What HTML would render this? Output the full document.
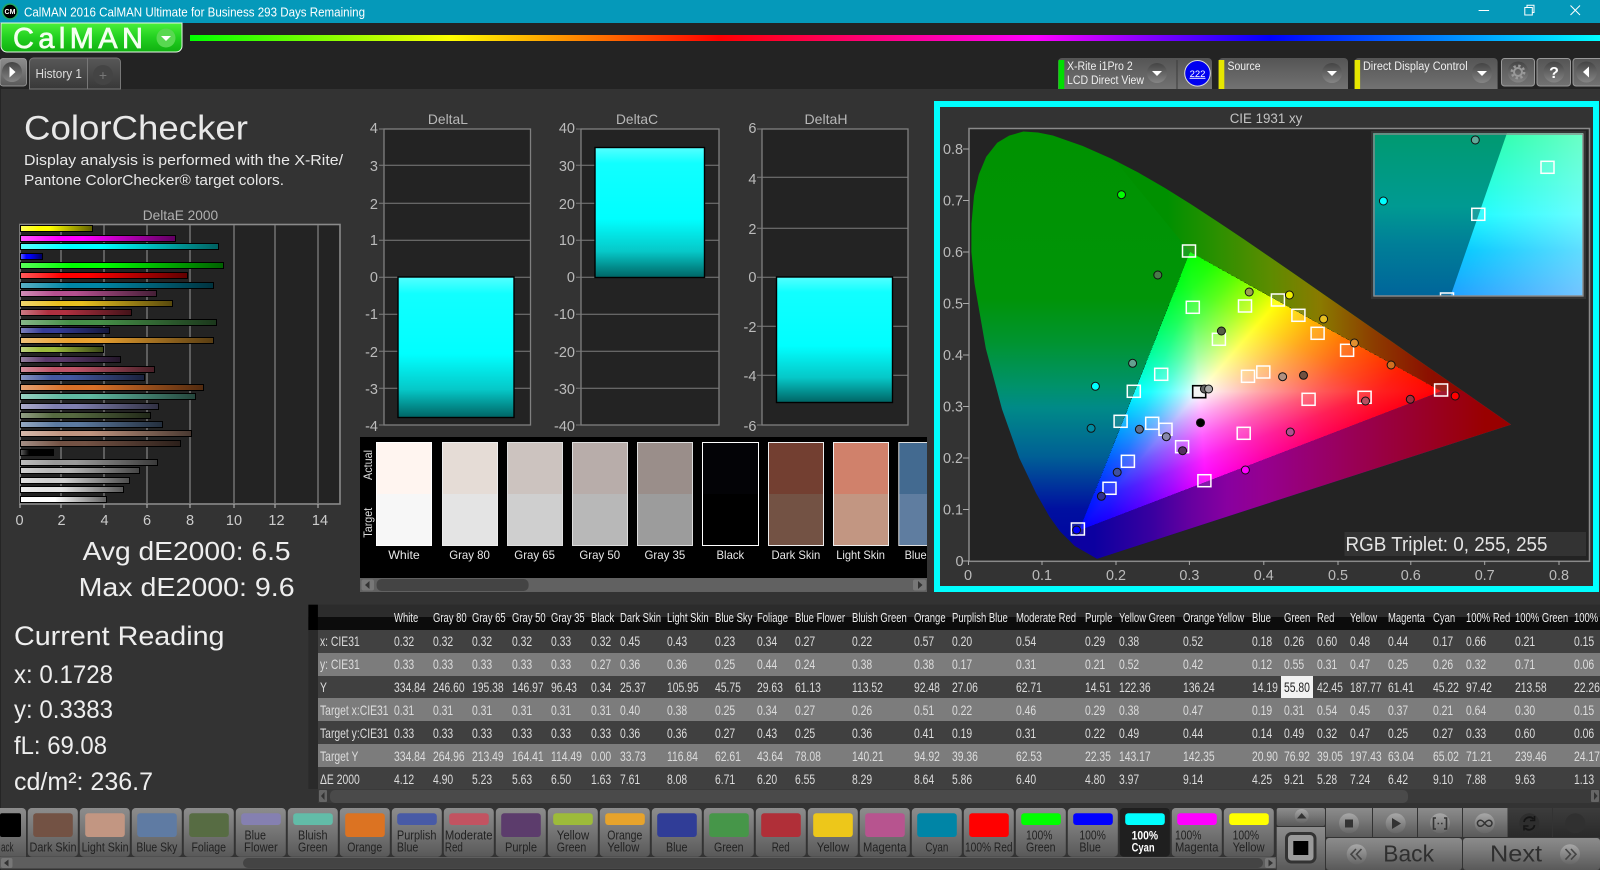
<!DOCTYPE html>
<html><head><meta charset="utf-8"><title>CalMAN ColorChecker</title>
<style>
html,body{margin:0;padding:0;background:#333;width:1600px;height:870px;overflow:hidden}
body{position:relative;font-family:"Liberation Sans",sans-serif}
svg{position:absolute;left:0;top:0}
text{font-family:"Liberation Sans",sans-serif}
.l{font-size:14.5px;fill:#bbb}
.e{text-anchor:end}.m{text-anchor:middle}
.t{font-size:12.5px;fill:#222}
.c{position:absolute;top:607.3px;font-size:14px;line-height:22.9px;color:#dcdcdc;white-space:nowrap;transform:scaleX(.74);transform-origin:0 0}
.c::first-line{font-size:12.8px;color:#eee}
.b{position:absolute;left:20px;height:7px;box-sizing:border-box;border:1.5px solid #000;background-image:linear-gradient(90deg,rgba(255,255,255,.35),transparent 25%,transparent 40%,rgba(0,0,0,.62))}
#hl{position:absolute;left:1281px;top:676px;width:32px;height:21.5px;background:#f2f2f2}
.w polygon{shape-rendering:crispEdges}
.w .s{mix-blend-mode:screen}
</style></head><body>
<svg width="1600" height="870" viewBox="0 0 1600 870" xmlns="http://www.w3.org/2000/svg">
<defs>
<linearGradient id="rb" x1="190" x2="1600" y1="0" y2="0" gradientUnits="userSpaceOnUse"><stop offset="0" stop-color="#0f0"/><stop offset=".185" stop-color="#ff0"/><stop offset=".375" stop-color="#f00"/><stop offset=".6" stop-color="#f0f"/><stop offset=".766" stop-color="#00f"/><stop offset="1" stop-color="#0ff"/></linearGradient>
<linearGradient id="cg" x1="0" x2="0" y1="0" y2="1"><stop offset="0" stop-color="#4af03a"/><stop offset=".5" stop-color="#22d020"/><stop offset="1" stop-color="#10b010"/></linearGradient>
<linearGradient id="btn" x1="0" x2="0" y1="0" y2="1"><stop offset="0" stop-color="#8c8c8c"/><stop offset=".35" stop-color="#7c7c7c"/><stop offset="1" stop-color="#595959"/></linearGradient>
<linearGradient id="dk" x1="0" x2="0" y1="0" y2="1"><stop offset="0" stop-color="#3c3c3c"/><stop offset="1" stop-color="#2a2a2a"/></linearGradient>
<linearGradient id="cir" x1="0" x2="0" y1="0" y2="1"><stop offset="0" stop-color="#a8a8a8"/><stop offset="1" stop-color="#666"/></linearGradient>
<linearGradient id="ci2" x1="0" x2="0" y1="0" y2="1"><stop offset="0" stop-color="#444"/><stop offset="1" stop-color="#858585"/></linearGradient>
<linearGradient id="top" x1="0" x2="0" y1="0" y2="1"><stop offset="0" stop-color="#555"/><stop offset="1" stop-color="#727272"/></linearGradient>
<linearGradient id="tab" x1="0" x2="0" y1="0" y2="1"><stop offset="0" stop-color="#585858"/><stop offset="1" stop-color="#383838"/></linearGradient>
<linearGradient id="bar" x1="0" x2="0" y1="0" y2="1"><stop offset="0" stop-color="#55ffff"/><stop offset=".12" stop-color="#11ffff"/><stop offset=".55" stop-color="#00ffff"/><stop offset=".8" stop-color="#06c8c8"/><stop offset="1" stop-color="#006464"/></linearGradient>
<clipPath id="hs"><polygon points=".1741,.005 .144,.0297 .1241,.0578 .1096,.0868 .0913,.1327 .0687,.2007 .0454,.295 .0235,.4127 .0082,.5384 .0039,.6 .004,.6548 .0075,.71 .0139,.7502 .024,.785 .0389,.812 .055,.826 .0743,.8338 .094,.832 .1142,.8262 .1547,.8059 .1929,.7816 .2296,.7543 .2658,.7243 .3016,.6923 .3373,.6589 .3731,.6245 .4087,.5896 .4441,.5547 .4788,.5202 .5125,.4866 .5448,.4544 .5752,.4242 .6029,.3965 .627,.3725 .6658,.334 .6915,.3083 .719,.2809 .7347,.2653"/></clipPath>
<linearGradient id="gL" gradientUnits="userSpaceOnUse" x1="0" x2="0" y1=".85" y2="0"><stop offset="0" stop-color="#009200"/><stop offset=".4" stop-color="#009408"/><stop offset=".5" stop-color="#009430"/><stop offset=".6" stop-color="#00926a"/><stop offset=".65" stop-color="#008a88"/><stop offset=".76" stop-color="#006095"/><stop offset=".88" stop-color="#0010a0"/><stop offset="1" stop-color="#0000a0"/></linearGradient>
<linearGradient id="gT" gradientUnits="userSpaceOnUse" x1=".27" x2=".7" y1="0" y2="0"><stop offset="0" stop-color="#009000"/><stop offset=".15" stop-color="#2a9000"/><stop offset=".32" stop-color="#5c8c00"/><stop offset=".48" stop-color="#8a7a00"/><stop offset=".65" stop-color="#8c3c00"/><stop offset=".82" stop-color="#8c1000"/><stop offset="1" stop-color="#900000"/></linearGradient>
<linearGradient id="gB" gradientUnits="userSpaceOnUse" x1=".17" x2=".7" y1="0" y2="0"><stop offset="0" stop-color="#0c00a0"/><stop offset=".15" stop-color="#3a00a0"/><stop offset=".25" stop-color="#6800a0"/><stop offset=".34" stop-color="#8800a0"/><stop offset=".43" stop-color="#950090"/><stop offset=".62" stop-color="#990060"/><stop offset=".81" stop-color="#990030"/><stop offset="1" stop-color="#990000"/></linearGradient>
<linearGradient id="fr"><stop offset="0" stop-color="#000"/><stop offset=".25" stop-color="#200000"/><stop offset=".5" stop-color="#5a0000"/><stop offset=".75" stop-color="#a60000"/><stop offset="1" stop-color="#f00"/></linearGradient>
<linearGradient id="fg"><stop offset="0" stop-color="#000"/><stop offset=".25" stop-color="#002000"/><stop offset=".5" stop-color="#005a00"/><stop offset=".75" stop-color="#00a600"/><stop offset="1" stop-color="#0f0"/></linearGradient>
<linearGradient id="fb"><stop offset="0" stop-color="#000"/><stop offset=".25" stop-color="#000020"/><stop offset=".5" stop-color="#00005a"/><stop offset=".75" stop-color="#0000a6"/><stop offset="1" stop-color="#00f"/></linearGradient>
<linearGradient id="w1a" href="#fg" gradientUnits="userSpaceOnUse" x1=".64" y1=".33" x2=".4006" y2=".4746"/>
<linearGradient id="w1b" href="#fb" gradientUnits="userSpaceOnUse" x1=".4393" y1=".4889" x2=".3127" y2=".329"/>
<linearGradient id="w2a" href="#fr" gradientUnits="userSpaceOnUse" x1=".3" y1=".6" x2=".4292" y2=".5219"/>
<linearGradient id="w2b" href="#fb" gradientUnits="userSpaceOnUse" x1=".4399" y1=".4883" x2=".3127" y2=".329"/>
<linearGradient id="w3a" href="#fb" gradientUnits="userSpaceOnUse" x1=".3" y1=".6" x2=".3" y2=".329"/>
<linearGradient id="w3b" href="#fr" gradientUnits="userSpaceOnUse" x1=".2312" y1=".3516" x2=".3127" y2=".329"/>
<linearGradient id="w4a" href="#fg" gradientUnits="userSpaceOnUse" x1=".15" y1=".06" x2=".15" y2=".329"/>
<linearGradient id="w4b" href="#fr" gradientUnits="userSpaceOnUse" x1=".2313" y1=".3517" x2=".3127" y2=".329"/>
<linearGradient id="w5a" href="#fr" gradientUnits="userSpaceOnUse" x1=".15" y1=".06" x2=".3251" y2=".0683"/>
<linearGradient id="w5b" href="#fg" gradientUnits="userSpaceOnUse" x1=".3885" y1=".1911" x2=".3127" y2=".329"/>
<linearGradient id="w6a" href="#fb" gradientUnits="userSpaceOnUse" x1=".64" y1=".33" x2=".3134" y2=".3145"/>
<linearGradient id="w6b" href="#fg" gradientUnits="userSpaceOnUse" x1=".3887" y1=".1913" x2=".3127" y2=".329"/>
<linearGradient id="iL" x1="0" x2="0" y1="0" y2="1"><stop offset="0" stop-color="#009a70"/><stop offset=".45" stop-color="#009a92"/><stop offset=".68" stop-color="#007f98"/><stop offset="1" stop-color="#00659a"/></linearGradient>
<linearGradient id="iR" x1="0" x2="0" y1="0" y2="1"><stop offset="0" stop-color="#10ffa0"/><stop offset=".3" stop-color="#10ffd8"/><stop offset=".5" stop-color="#10fcff"/><stop offset=".72" stop-color="#00c8ff"/><stop offset="1" stop-color="#20a0ff"/></linearGradient>
<linearGradient id="iW" x1="0" x2="1" y1="0" y2="0"><stop offset="0" stop-color="#fff" stop-opacity="0"/><stop offset="1" stop-color="#fff" stop-opacity=".38"/></linearGradient>
<clipPath id="ins"><rect x="1373" y="133" width="210" height="163"/></clipPath>
</defs>

<!-- base -->
<rect width="1600" height="870" fill="#333"/>
<rect y="23" width="1600" height="66" fill="#232323"/>
<rect x="0" y="89" width="1" height="781" fill="#252525"/>
<rect width="1600" height="23" fill="#0599ba"/>
<circle cx="10" cy="11.5" r="7.5" fill="#000" stroke="#2a6" stroke-width="1.5"/>
<text x="10" y="14" class="m" font-size="7" font-weight="bold" fill="#fff">CM</text>
<text x="24" y="16.5" font-size="12.5" fill="#fff" textLength="341" lengthAdjust="spacingAndGlyphs">CalMAN 2016 CalMAN Ultimate for Business 293 Days Remaining</text>
<rect x="1478.6" y="10" width="10.5" height="1" fill="#fff"/>
<path d="M1524.8 7.5h7.5v7.5h-7.5zM1527 7.5v-2.3h7v7.3h-1.7" fill="none" stroke="#fff" stroke-width="1"/>
<path d="M1570.5 5.5l9.5 9.5M1580 5.5l-9.5 9.5" stroke="#fff" stroke-width="1" fill="none"/>

<!-- CalMAN logo + rainbow -->
<path d="M1 23h181v23a6 6 0 0 1-6 6H7a6 6 0 0 1-6-6z" fill="url(#cg)" stroke="#e8f8e8" stroke-width="1"/>
<text x="13" y="48" font-size="29" fill="#f4fff0" stroke="#f4fff0" stroke-width=".7" textLength="130" lengthAdjust="spacing">CalMAN</text>
<circle cx="166" cy="38" r="9.5" fill="#58d850"/>
<polygon points="161,36 171,36 166,41" fill="#fff"/>
<rect x="190" y="35" width="1410" height="6" fill="url(#rb)"/>

<!-- tabs -->
<rect x="0" y="58.5" width="26.5" height="27.5" rx="3" fill="url(#btn)" stroke="#aaa" stroke-width=".7"/>
<circle cx="12" cy="72" r="10" fill="url(#ci2)"/>
<polygon points="9.5,66.5 15.5,72 9.5,77.5" fill="#fff"/>
<path d="M29.5 89V62a4 4 0 0 1 4-4h83a4 4 0 0 1 4 4v27z" fill="url(#tab)" stroke="#777" stroke-width="1"/>
<rect x="87" y="58" width="1" height="31" fill="#777"/>
<text x="35.5" y="78" font-size="12.5" fill="#ddd" textLength="46.5" lengthAdjust="spacingAndGlyphs">History 1</text>
<circle cx="103" cy="75" r="10" fill="#444"/>
<text x="103" y="80" class="m" font-size="14" fill="#777">+</text>

<!-- top right controls -->
<path d="M1058 89V62a4 4 0 0 1 4-4h146a4 4 0 0 1 4 4v27z" fill="url(#top)"/>
<rect x="1058.5" y="60" width="5.8" height="29" fill="#00dd00"/>
<text x="1067" y="70" font-size="11.5" fill="#eee" textLength="65.7" lengthAdjust="spacingAndGlyphs">X-Rite i1Pro 2</text>
<text x="1067" y="84" font-size="11.5" fill="#eee" textLength="77" lengthAdjust="spacingAndGlyphs">LCD Direct View</text>
<circle cx="1157" cy="73" r="10" fill="url(#ci2)"/><polygon points="1152,71 1162,71 1157,76" fill="#fff"/>
<rect x="1176.5" y="60" width="1" height="29" fill="#3c3c3c"/>
<circle cx="1197.5" cy="73.3" r="12.8" fill="#0000f0" stroke="#ddd" stroke-width="1"/>
<text x="1197.5" y="76.8" class="m" font-size="9.5" fill="#fff" text-decoration="underline">222</text>
<path d="M1218.6 89V62a4 4 0 0 1 4-4h121.4a4 4 0 0 1 4 4v27z" fill="url(#top)"/>
<rect x="1218.6" y="60" width="5.7" height="29" fill="#e6e600"/>
<text x="1227.5" y="70" font-size="11.5" fill="#eee" textLength="33" lengthAdjust="spacingAndGlyphs">Source</text>
<circle cx="1332" cy="73" r="10" fill="url(#ci2)"/><polygon points="1327,71 1337,71 1332,76" fill="#fff"/>
<path d="M1354.6 89V62a4 4 0 0 1 4-4h135a4 4 0 0 1 4 4v27z" fill="url(#top)"/>
<rect x="1354.6" y="60" width="5.5" height="29" fill="#e6e600"/>
<text x="1363" y="70" font-size="11.5" fill="#eee" textLength="104.6" lengthAdjust="spacingAndGlyphs">Direct Display Control</text>
<circle cx="1482" cy="73" r="10" fill="url(#ci2)"/><polygon points="1477,71 1487,71 1482,76" fill="#fff"/>
<rect x="1501.5" y="58.5" width="33" height="27.5" rx="3" fill="url(#top)" stroke="#999" stroke-width="1"/>
<rect x="1537" y="58.5" width="33.5" height="27.5" rx="3" fill="url(#top)" stroke="#999" stroke-width="1"/>
<rect x="1573" y="58.5" width="30" height="27.5" rx="3" fill="url(#top)" stroke="#999" stroke-width="1"/>
<circle cx="1518" cy="72" r="10.5" fill="url(#ci2)"/>
<circle cx="1518" cy="72" r="4" fill="none" stroke="#999" stroke-width="2"/>
<circle cx="1518" cy="72" r="6.2" fill="none" stroke="#999" stroke-width="2.4" stroke-dasharray="2.4 2.47"/>
<circle cx="1554" cy="72" r="10.5" fill="url(#ci2)"/>
<text x="1554" y="78" class="m" font-size="16" font-weight="bold" fill="#fff">?</text>
<circle cx="1586.4" cy="72" r="10.5" fill="url(#ci2)"/>
<polygon points="1589,66.5 1589,77.5 1583,72" fill="#fff"/>

<!-- left text -->
<text x="24" y="139.3" font-size="34" fill="#e8e8e8" textLength="224" lengthAdjust="spacingAndGlyphs">ColorChecker</text>
<text x="24" y="165" font-size="15" fill="#e8e8e8" textLength="319" lengthAdjust="spacingAndGlyphs">Display analysis is performed with the X-Rite/</text>
<text x="24" y="185" font-size="15" fill="#e8e8e8" textLength="260" lengthAdjust="spacingAndGlyphs">Pantone ColorChecker® target colors.</text>

<!-- DeltaE chart -->
<text x="142.7" y="220" font-size="14" fill="#b0b0b0" textLength="75.5" lengthAdjust="spacingAndGlyphs">DeltaE 2000</text>
<rect x="20" y="224.5" width="320" height="279.5" fill="#232323" stroke="#8a8a8a" stroke-width="1.6"/>
<g stroke="#777" stroke-width="1.4"><path d="M61 225V504M104 225V504M147 225V504M190 225V504M234 225V504M275 225V504M318 225V504"/></g>
<text x="19.5" y="525" class="l m" style="fill:#ccc">0</text><text x="61.5" y="525" class="l m" style="fill:#ccc">2</text><text x="104.5" y="525" class="l m" style="fill:#ccc">4</text><text x="147" y="525" class="l m" style="fill:#ccc">6</text><text x="190" y="525" class="l m" style="fill:#ccc">8</text><text x="234" y="525" class="l m" style="fill:#ccc">10</text><text x="276.5" y="525" class="l m" style="fill:#ccc">12</text><text x="320" y="525" class="l m" style="fill:#ccc">14</text>
<path d="M20 504v4M61 504v4M104 504v4M147 504v4M190 504v4M234 504v4M275 504v4M318 504v4" stroke="#aaa" stroke-width="1.2"/>

<!-- readouts -->
<text x="82.6" y="560" font-size="26" fill="#eee" textLength="208" lengthAdjust="spacingAndGlyphs">Avg dE2000: 6.5</text>
<text x="78.6" y="596" font-size="26" fill="#eee" textLength="216" lengthAdjust="spacingAndGlyphs">Max dE2000: 9.6</text>
<text x="14" y="645" font-size="27" fill="#eee" textLength="210.5" lengthAdjust="spacingAndGlyphs">Current Reading</text>
<text x="14" y="683" font-size="25" fill="#eee" textLength="99" lengthAdjust="spacingAndGlyphs">x: 0.1728</text>
<text x="14" y="718" font-size="25" fill="#eee" textLength="99" lengthAdjust="spacingAndGlyphs">y: 0.3383</text>
<text x="14" y="754" font-size="25" fill="#eee" textLength="93" lengthAdjust="spacingAndGlyphs">fL: 69.08</text>
<text x="14" y="790" font-size="25" fill="#eee" textLength="139" lengthAdjust="spacingAndGlyphs">cd/m²: 236.7</text>

<!-- Delta charts -->
<text x="447.9" y="124" class="m" font-size="14" fill="#b8b8b8" textLength="40" lengthAdjust="spacingAndGlyphs">DeltaL</text>
<text x="637" y="124" class="m" font-size="14" fill="#b8b8b8" textLength="42" lengthAdjust="spacingAndGlyphs">DeltaC</text>
<text x="826" y="124" class="m" font-size="14" fill="#b8b8b8" textLength="43" lengthAdjust="spacingAndGlyphs">DeltaH</text>
<rect x="384" y="129" width="146.5" height="296" fill="#232323" stroke="#808080" stroke-width="1.3"/>
<path d="M379 129h5M379 165.3H530M379 203.3H530M379 240.3H530M379 277.3H530M379 314.3H530M379 351.3H530M379 388.3H530M379 425h5" stroke="#7c7c7c" stroke-width="1" fill="none"/>
<rect x="398" y="277" width="116" height="140.5" fill="url(#bar)" stroke="#000" stroke-width="1.4"/>
<text x="378" y="133" class="l e">4</text><text x="378" y="171" class="l e">3</text><text x="378" y="209" class="l e">2</text><text x="378" y="245" class="l e">1</text><text x="378" y="282" class="l e">0</text><text x="378" y="319" class="l e">-1</text><text x="378" y="357" class="l e">-2</text><text x="378" y="394" class="l e">-3</text><text x="378" y="431" class="l e">-4</text>
<rect x="581" y="129" width="138" height="296" fill="#232323" stroke="#808080" stroke-width="1.3"/>
<path d="M576 129h5M576 165.3H719M576 203.3H719M576 240.3H719M576 277.3H719M576 314.3H719M576 351.3H719M576 388.3H719M576 425h5" stroke="#7c7c7c" stroke-width="1" fill="none"/>
<rect x="595" y="147.5" width="109.5" height="130" fill="url(#bar)" stroke="#000" stroke-width="1.4"/>
<text x="575" y="133" class="l e">40</text><text x="575" y="171" class="l e">30</text><text x="575" y="209" class="l e">20</text><text x="575" y="245" class="l e">10</text><text x="575" y="282" class="l e">0</text><text x="575" y="319" class="l e">-10</text><text x="575" y="357" class="l e">-20</text><text x="575" y="394" class="l e">-30</text><text x="575" y="431" class="l e">-40</text>
<rect x="762" y="129" width="146" height="296" fill="#232323" stroke="#808080" stroke-width="1.3"/>
<path d="M757 129h5M757 177.3H908M757 228.3H908M757 277.3H908M757 326.3H908M757 375.3H908M757 425h5" stroke="#7c7c7c" stroke-width="1" fill="none"/>
<rect x="776.5" y="277" width="116" height="125.5" fill="url(#bar)" stroke="#000" stroke-width="1.4"/>
<text x="756.4" y="133" class="l e">6</text><text x="756.4" y="184" class="l e">4</text><text x="756.4" y="234" class="l e">2</text><text x="756.4" y="282" class="l e">0</text><text x="756.4" y="332" class="l e">-2</text><text x="756.4" y="381" class="l e">-4</text><text x="756.4" y="431" class="l e">-6</text>

<!-- swatch strip -->
<rect x="360" y="437" width="567" height="141" fill="#000"/>
<text transform="translate(372 465) rotate(-90)" class="m" font-size="12" fill="#ddd" textLength="30" lengthAdjust="spacingAndGlyphs">Actual</text>
<text transform="translate(372 522.7) rotate(-90)" class="m" font-size="12" fill="#ddd" textLength="30" lengthAdjust="spacingAndGlyphs">Target</text>
<g>
<rect x="376" y="442" width="56" height="104" fill="#fff"/><rect x="377" y="443" width="54" height="51" fill="#fff5f0"/><rect x="377" y="494" width="54" height="51" fill="#f7f7f7"/>
<rect x="442" y="442" width="56" height="104" fill="#eee"/><rect x="443" y="443" width="54" height="51" fill="#e5dcd6"/><rect x="443" y="494" width="54" height="51" fill="#e4e4e4"/>
<rect x="507" y="442" width="56" height="104" fill="#ddd"/><rect x="508" y="443" width="54" height="51" fill="#ccc3bf"/><rect x="508" y="494" width="54" height="51" fill="#cfcfcf"/>
<rect x="572" y="442" width="56" height="104" fill="#ddd"/><rect x="573" y="443" width="54" height="51" fill="#b8adaa"/><rect x="573" y="494" width="54" height="51" fill="#b8b8b8"/>
<rect x="637" y="442" width="56" height="104" fill="#ddd"/><rect x="638" y="443" width="54" height="51" fill="#9a8e8a"/><rect x="638" y="494" width="54" height="51" fill="#9c9c9c"/>
<rect x="702" y="442" width="57" height="104" fill="#fff"/><rect x="703" y="443" width="55" height="51" fill="#030306"/><rect x="703" y="494" width="55" height="51" fill="#000"/>
<rect x="768" y="442" width="56" height="104" fill="#eee"/><rect x="769" y="443" width="54" height="51" fill="#733f31"/><rect x="769" y="494" width="54" height="51" fill="#735244"/>
<rect x="833" y="442" width="56" height="104" fill="#eee"/><rect x="834" y="443" width="54" height="51" fill="#d0816b"/><rect x="834" y="494" width="54" height="51" fill="#c29682"/>
<rect x="898.3" y="442" width="28.7" height="104" fill="#ddd"/><rect x="899.3" y="443" width="27.7" height="51" fill="#436a90"/><rect x="899.3" y="494" width="27.7" height="51" fill="#5f7da0"/>
</g>
<g font-size="12" fill="#e8e8e8">
<text x="388.3" y="559" textLength="31.5" lengthAdjust="spacingAndGlyphs">White</text>
<text x="449.2" y="559" textLength="40.7" lengthAdjust="spacingAndGlyphs">Gray 80</text>
<text x="514.3" y="559" textLength="40.7" lengthAdjust="spacingAndGlyphs">Gray 65</text>
<text x="579.4" y="559" textLength="40.7" lengthAdjust="spacingAndGlyphs">Gray 50</text>
<text x="644.5" y="559" textLength="40.7" lengthAdjust="spacingAndGlyphs">Gray 35</text>
<text x="716.5" y="559" textLength="27.7" lengthAdjust="spacingAndGlyphs">Black</text>
<text x="771.5" y="559" textLength="48.8" lengthAdjust="spacingAndGlyphs">Dark Skin</text>
<text x="836.2" y="559" textLength="48.8" lengthAdjust="spacingAndGlyphs">Light Skin</text>
<text x="904.6" y="559" textLength="22" lengthAdjust="spacingAndGlyphs">Blue</text>
</g>
<rect x="360" y="578" width="567" height="14" fill="#616161"/>
<rect x="376.6" y="579" width="152" height="12" rx="5" fill="#444"/>
<rect x="361.5" y="579.5" width="12.5" height="11" rx="2" fill="#777"/><polygon points="369.5,581 369.5,589 365,585" fill="#333"/>
<rect x="913" y="579.5" width="13" height="11" rx="2" fill="#777"/><polygon points="918,581 918,589 922.5,585" fill="#333"/>

<!-- CIE -->
<rect x="937" y="104" width="659" height="485" fill="#333" stroke="#00ffff" stroke-width="6"/>
<text x="1266" y="123" class="m" font-size="13.5" fill="#c4c4c4" textLength="72.6" lengthAdjust="spacingAndGlyphs">CIE 1931 xy</text>
<rect x="969" y="128.5" width="620.5" height="432.8" fill="#232323" stroke="#8a8a8a" stroke-width="1.5"/>
<g transform="translate(968.5 561.3) scale(738.5 -515.4)">
 <g clip-path="url(#hs)">
  <rect x="-.05" y="-.05" width=".9" height=".95" fill="url(#gL)"/>
  <polygon points=".3,.6 .1,.95 .85,.95 .85,.26 .64,.33" fill="url(#gT)"/>
  <polygon points=".15,.06 .64,.33 .85,.33 .85,-.05 .1,-.05" fill="url(#gB)"/>
 </g>
 <g class="w" style="isolation:isolate">
  <polygon points=".64,.33 .3,.6 .15,.06" fill="#000"/>
  <polygon class="s" points=".64,.33 .419,.505 .3127,.329" fill="#f00"/><polygon class="s" points=".64,.33 .419,.505 .3127,.329" fill="url(#w1a)"/><polygon class="s" points=".64,.33 .419,.505 .3127,.329" fill="url(#w1b)"/>
  <polygon class="s" points=".3,.6 .419,.505 .3127,.329" fill="#0f0"/><polygon class="s" points=".3,.6 .419,.505 .3127,.329" fill="url(#w2a)"/><polygon class="s" points=".3,.6 .419,.505 .3127,.329" fill="url(#w2b)"/>
  <polygon class="s" points=".3,.6 .225,.329 .3127,.329" fill="#0f0"/><polygon class="s" points=".3,.6 .225,.329 .3127,.329" fill="url(#w3a)"/><polygon class="s" points=".3,.6 .225,.329 .3127,.329" fill="url(#w3b)"/>
  <polygon class="s" points=".15,.06 .225,.329 .3127,.329" fill="#00f"/><polygon class="s" points=".15,.06 .225,.329 .3127,.329" fill="url(#w4a)"/><polygon class="s" points=".15,.06 .225,.329 .3127,.329" fill="url(#w4b)"/>
  <polygon class="s" points=".15,.06 .321,.154 .3127,.329" fill="#00f"/><polygon class="s" points=".15,.06 .321,.154 .3127,.329" fill="url(#w5a)"/><polygon class="s" points=".15,.06 .321,.154 .3127,.329" fill="url(#w5b)"/>
  <polygon class="s" points=".64,.33 .321,.154 .3127,.329" fill="#f00"/><polygon class="s" points=".64,.33 .321,.154 .3127,.329" fill="url(#w6a)"/><polygon class="s" points=".64,.33 .321,.154 .3127,.329" fill="url(#w6b)"/>
 </g>
</g>
<path d="M963 149h6M963 200.5h6M963 252h6M963 303.5h6M963 355h6M963 406.5h6M963 458h6M963 509.5h6M963 561h6M968.5 561v4M1042 561v4M1116 561v4M1189.4 561v4M1263.8 561v4M1338 561v4M1410.8 561v4M1484.7 561v4M1559 561v4" stroke="#aaa" stroke-width="1"/>
<g font-size="14.5" fill="#bbb">
<text x="943" y="154" textLength="20" lengthAdjust="spacingAndGlyphs">0.8</text><text x="943" y="205.5" textLength="20" lengthAdjust="spacingAndGlyphs">0.7</text><text x="943" y="257" textLength="20" lengthAdjust="spacingAndGlyphs">0.6</text><text x="943" y="308.5" textLength="20" lengthAdjust="spacingAndGlyphs">0.5</text><text x="943" y="360" textLength="20" lengthAdjust="spacingAndGlyphs">0.4</text><text x="943" y="411.5" textLength="20" lengthAdjust="spacingAndGlyphs">0.3</text><text x="943" y="463" textLength="20" lengthAdjust="spacingAndGlyphs">0.2</text><text x="943" y="514.5" textLength="20" lengthAdjust="spacingAndGlyphs">0.1</text><text x="955.5" y="566">0</text>
<text x="968" y="580" class="m">0</text><text x="1032" y="580" textLength="20" lengthAdjust="spacingAndGlyphs">0.1</text><text x="1106" y="580" textLength="20" lengthAdjust="spacingAndGlyphs">0.2</text><text x="1179.4" y="580" textLength="20" lengthAdjust="spacingAndGlyphs">0.3</text><text x="1253.8" y="580" textLength="20" lengthAdjust="spacingAndGlyphs">0.4</text><text x="1328" y="580" textLength="20" lengthAdjust="spacingAndGlyphs">0.5</text><text x="1400.8" y="580" textLength="20" lengthAdjust="spacingAndGlyphs">0.6</text><text x="1474.7" y="580" textLength="20" lengthAdjust="spacingAndGlyphs">0.7</text><text x="1549" y="580" textLength="20" lengthAdjust="spacingAndGlyphs">0.8</text>
</g>
<!-- target squares -->
<g fill="#fff" fill-opacity=".1" stroke="#fff" stroke-width="1.5">
<rect x="1182.5" y="245" width="13" height="12"/><rect x="1186.3" y="301.3" width="13" height="12"/><rect x="1238.5" y="300" width="13" height="12"/><rect x="1271.4" y="294" width="13" height="12"/><rect x="1291.9" y="309.3" width="13" height="12"/><rect x="1311.1" y="327.3" width="13" height="12"/><rect x="1340.6" y="344.3" width="13" height="12"/><rect x="1434.6" y="384" width="13" height="12"/><rect x="1358.1" y="391.3" width="13" height="12"/><rect x="1302.1" y="393.3" width="13" height="12"/><rect x="1212.4" y="333.3" width="13" height="12"/><rect x="1154.7" y="368.3" width="13" height="12"/><rect x="1127.3" y="385.3" width="13" height="12"/><rect x="1241.5" y="370.3" width="13" height="12"/><rect x="1256.8" y="366" width="13" height="12"/><rect x="1237.2" y="427.3" width="13" height="12"/><rect x="1114.1" y="415.3" width="13" height="12"/><rect x="1145.7" y="417.3" width="13" height="12"/><rect x="1159" y="423.3" width="13" height="12"/><rect x="1175.6" y="440.7" width="13" height="12"/><rect x="1121.4" y="455.3" width="13" height="12"/><rect x="1103" y="482.3" width="13" height="12"/><rect x="1071.4" y="523" width="13" height="12"/><rect x="1197.9" y="474.7" width="13" height="12"/>
</g>
<rect x="1192.7" y="385.7" width="13" height="12" fill="#f4f4f4" stroke="#000" stroke-width="1.6"/>
<g stroke="#111" stroke-width="1">
<circle cx="1121.5" cy="194.7" r="4" fill="#0f0"/><circle cx="1157.8" cy="275" r="4" fill="#4a7a4a"/><circle cx="1249.2" cy="292" r="4" fill="#9aa050"/><circle cx="1289.4" cy="295" r="4" fill="#ee0"/><circle cx="1323.6" cy="319" r="4" fill="#e8c020"/><circle cx="1221.4" cy="331" r="4" fill="#555f44"/><circle cx="1354.4" cy="343" r="4" fill="#e09030"/><circle cx="1132.6" cy="363.3" r="4" fill="#65a090"/><circle cx="1391.1" cy="365" r="4" fill="#d07020"/><circle cx="1282.6" cy="376.7" r="4" fill="#b09080"/><circle cx="1303.5" cy="375.3" r="4" fill="#705040"/><circle cx="1095.4" cy="386.3" r="4" fill="#0ff"/><circle cx="1204.4" cy="389" r="4" fill="#666"/><circle cx="1208.6" cy="389" r="4" fill="#aaa"/><circle cx="1455.2" cy="396" r="4" fill="#f00"/><circle cx="1410.3" cy="399.3" r="4" fill="#a03040"/><circle cx="1365.5" cy="401" r="4" fill="#b85060"/><circle cx="1200.5" cy="422.7" r="4" fill="#000"/><circle cx="1091.1" cy="428.3" r="4" fill="#008aa0"/><circle cx="1139.4" cy="429.3" r="4" fill="#607090"/><circle cx="1290.3" cy="432" r="4" fill="#b05090"/><circle cx="1166.3" cy="436.7" r="4" fill="#8888aa"/><circle cx="1182.6" cy="450.7" r="4" fill="#553060"/><circle cx="1245.4" cy="470" r="4" fill="#f0f"/><circle cx="1117.2" cy="472.3" r="4" fill="#4050a0"/><circle cx="1101.4" cy="496.3" r="4" fill="#303090"/><circle cx="1076.6" cy="530" r="4" fill="#00f"/>
</g>
<!-- inset -->
<rect x="1371" y="131" width="215" height="168" fill="#333"/>
<g clip-path="url(#ins)">
<rect x="1373" y="133" width="210" height="163" fill="url(#iL)"/>
<polygon points="1507,133 1583,133 1583,296 1450.5,296" fill="url(#iR)"/>
<polygon points="1507,133 1583,133 1583,296 1450.5,296" fill="url(#iW)"/>
<circle cx="1475.3" cy="140" r="4" fill="#60a898" stroke="#111"/>
<circle cx="1383.4" cy="201" r="4" fill="#0ff" stroke="#111"/>
<g fill="#fff" fill-opacity=".1" stroke="#fff" stroke-width="1.5"><rect x="1541" y="161.3" width="13" height="12"/><rect x="1471.8" y="208.3" width="13" height="12"/><rect x="1440.5" y="293" width="13" height="12"/></g>
</g>
<rect x="1374" y="134" width="209" height="162" fill="none" stroke="#8c8c8c" stroke-width="1.4"/>
<rect x="1344.5" y="532" width="241.5" height="24" fill="#333"/>
<text x="1345.5" y="551" font-size="20" fill="#e4e4e4" textLength="202" lengthAdjust="spacingAndGlyphs">RGB Triplet: 0, 255, 255</text>

<!-- table backgrounds -->
<rect x="308.4" y="604.7" width="1291.6" height="13" fill="#2c2c2c"/>
<rect x="308.4" y="617" width="1291.6" height="13" fill="#0c0c0c"/>
<rect x="308.4" y="604.7" width="9.5" height="25.5" fill="#000"/>
<rect x="308.4" y="630" width="9.5" height="159" fill="#2a2a2a"/>
<rect x="318" y="630" width="1282" height="23" fill="#414141"/>
<rect x="318" y="653" width="1282" height="23" fill="#7c7c7c"/>
<rect x="318" y="676" width="1282" height="22" fill="#404040"/>
<rect x="318" y="698" width="1282" height="23" fill="#7c7c7c"/>
<rect x="318" y="721" width="1282" height="23" fill="#404040"/>
<rect x="318" y="744" width="1282" height="23" fill="#7c7c7c"/>
<rect x="318" y="767" width="1282" height="22" fill="#404040"/>
<rect x="318" y="789" width="1282" height="14" fill="#3a3a3a"/>
<rect x="330" y="790" width="1078" height="13" rx="5" fill="#4a4a4a"/>
<rect x="319" y="790" width="8" height="12" rx="1" fill="#666"/><polygon points="324.5,792 324.5,800 321,796" fill="#333"/>
<rect x="1591" y="790" width="8" height="12" rx="1" fill="#666"/><polygon points="1594,792 1594,800 1597.5,796" fill="#333"/>

<!-- bottom swatch bar -->
<rect x="0" y="857" width="1276" height="11.5" fill="#5e5e5e"/>
<rect x="243" y="858" width="1020" height="10" rx="5" fill="#444"/>
<rect x="1" y="858" width="11.5" height="10" rx="2" fill="#777"/><polygon points="8.5,859.5 8.5,866.5 4,863" fill="#333"/>
<rect x="1265" y="858" width="10.5" height="10" rx="2" fill="#777"/><polygon points="1268.5,859.5 1268.5,866.5 1273,863" fill="#333"/>

<path d="M0 808h22a4 4 0 0 1 4 4v44.7H0z" fill="url(#btn)"/>
<rect x="0" y="813.3" width="21" height="23.7" rx="2" fill="#000"/>
<text x="1" y="851.7" class="t" textLength="12.5" lengthAdjust="spacingAndGlyphs">ack</text>
<g fill="url(#btn)">
<rect x="27.8" y="808" width="50" height="48.7" rx="4"/><rect x="79.8" y="808" width="50" height="48.7" rx="4"/><rect x="131.8" y="808" width="50" height="48.7" rx="4"/><rect x="183.8" y="808" width="50" height="48.7" rx="4"/><rect x="235.8" y="808" width="50" height="48.7" rx="4"/><rect x="287.8" y="808" width="50" height="48.7" rx="4"/><rect x="339.8" y="808" width="50" height="48.7" rx="4"/><rect x="391.8" y="808" width="50" height="48.7" rx="4"/><rect x="443.8" y="808" width="50" height="48.7" rx="4"/><rect x="495.8" y="808" width="50" height="48.7" rx="4"/><rect x="547.8" y="808" width="50" height="48.7" rx="4"/><rect x="599.8" y="808" width="50" height="48.7" rx="4"/><rect x="651.8" y="808" width="50" height="48.7" rx="4"/><rect x="703.8" y="808" width="50" height="48.7" rx="4"/><rect x="755.8" y="808" width="50" height="48.7" rx="4"/><rect x="807.8" y="808" width="50" height="48.7" rx="4"/><rect x="859.8" y="808" width="50" height="48.7" rx="4"/><rect x="911.8" y="808" width="50" height="48.7" rx="4"/><rect x="963.8" y="808" width="50" height="48.7" rx="4"/><rect x="1015.8" y="808" width="50" height="48.7" rx="4"/><rect x="1067.8" y="808" width="50" height="48.7" rx="4"/><rect x="1171.8" y="808" width="50" height="48.7" rx="4"/><rect x="1223.8" y="808" width="50" height="48.7" rx="4"/>
</g>
<rect x="1119.8" y="808" width="50" height="48.7" rx="4" fill="#1f1f1f"/>
<rect x="33.2" y="813.3" width="39.6" height="23.7" rx="3" fill="#735244"/><rect x="85.2" y="813.3" width="39.6" height="23.7" rx="3" fill="#c29682"/><rect x="137.2" y="813.3" width="39.6" height="23.7" rx="3" fill="#5f7ba3"/><rect x="189.2" y="813.3" width="39.6" height="23.7" rx="3" fill="#576c43"/><rect x="241.2" y="813.3" width="39.6" height="11.7" rx="3" fill="#8580b1"/><rect x="293.2" y="813.3" width="39.6" height="11.7" rx="3" fill="#62bca8"/><rect x="345.2" y="813.3" width="39.6" height="23.7" rx="3" fill="#dc7322"/><rect x="397.2" y="813.3" width="39.6" height="11.7" rx="3" fill="#485aa6"/><rect x="449.2" y="813.3" width="39.6" height="11.7" rx="3" fill="#c25361"/><rect x="501.2" y="813.3" width="39.6" height="23.7" rx="3" fill="#5c3c6c"/><rect x="553.2" y="813.3" width="39.6" height="11.7" rx="3" fill="#9dbb3a"/><rect x="605.2" y="813.3" width="39.6" height="11.7" rx="3" fill="#e6a32c"/><rect x="657.2" y="813.3" width="39.6" height="23.7" rx="3" fill="#303d97"/><rect x="709.2" y="813.3" width="39.6" height="23.7" rx="3" fill="#469649"/><rect x="761.2" y="813.3" width="39.6" height="23.7" rx="3" fill="#b02f38"/><rect x="813.2" y="813.3" width="39.6" height="23.7" rx="3" fill="#edc71a"/><rect x="865.2" y="813.3" width="39.6" height="23.7" rx="3" fill="#b7548f"/><rect x="917.2" y="813.3" width="39.6" height="23.7" rx="3" fill="#0085a6"/><rect x="969.2" y="813.3" width="39.6" height="23.7" rx="3" fill="#f00"/><rect x="1021.2" y="813.3" width="39.6" height="11.7" rx="3" fill="#0f0"/><rect x="1073.2" y="813.3" width="39.6" height="11.7" rx="3" fill="#00f"/><rect x="1125.2" y="813.3" width="39.6" height="11.7" rx="3" fill="#0ff"/><rect x="1177.2" y="813.3" width="39.6" height="11.7" rx="3" fill="#f0f"/><rect x="1229.2" y="813.3" width="39.6" height="11.7" rx="3" fill="#ff0"/>
<g>
<text class="t" x="29.5" y="851.7" textLength="47" lengthAdjust="spacingAndGlyphs">Dark Skin</text>
<text class="t" x="81.6" y="851.7" textLength="47" lengthAdjust="spacingAndGlyphs">Light Skin</text>
<text class="t" x="136.4" y="851.7" textLength="41" lengthAdjust="spacingAndGlyphs">Blue Sky</text>
<text class="t" x="191.5" y="851.7" textLength="34.5" lengthAdjust="spacingAndGlyphs">Foliage</text>
<text class="t" x="244.5" y="839.7" textLength="21.5" lengthAdjust="spacingAndGlyphs">Blue</text><text class="t" x="244" y="851.7" textLength="33.7" lengthAdjust="spacingAndGlyphs">Flower</text>
<text class="t" x="298" y="839.7" textLength="29.5" lengthAdjust="spacingAndGlyphs">Bluish</text><text class="t" x="298" y="851.7" textLength="29.5" lengthAdjust="spacingAndGlyphs">Green</text>
<text class="t" x="347.2" y="851.7" textLength="35" lengthAdjust="spacingAndGlyphs">Orange</text>
<text class="t" x="396.9" y="839.7" textLength="39.6" lengthAdjust="spacingAndGlyphs">Purplish</text><text class="t" x="396.9" y="851.7" textLength="21.5" lengthAdjust="spacingAndGlyphs">Blue</text>
<text class="t" x="444.9" y="839.7" textLength="47.6" lengthAdjust="spacingAndGlyphs">Moderate</text><text class="t" x="444.9" y="851.7" textLength="18" lengthAdjust="spacingAndGlyphs">Red</text>
<text class="t" x="505" y="851.7" textLength="32" lengthAdjust="spacingAndGlyphs">Purple</text>
<text class="t" x="556.8" y="839.7" textLength="32.4" lengthAdjust="spacingAndGlyphs">Yellow</text><text class="t" x="556.8" y="851.7" textLength="29.5" lengthAdjust="spacingAndGlyphs">Green</text>
<text class="t" x="607.3" y="839.7" textLength="35" lengthAdjust="spacingAndGlyphs">Orange</text><text class="t" x="607.3" y="851.7" textLength="32" lengthAdjust="spacingAndGlyphs">Yellow</text>
<text class="t" x="666" y="851.7" textLength="21.5" lengthAdjust="spacingAndGlyphs">Blue</text>
<text class="t" x="714" y="851.7" textLength="29.5" lengthAdjust="spacingAndGlyphs">Green</text>
<text class="t" x="771.7" y="851.7" textLength="18" lengthAdjust="spacingAndGlyphs">Red</text>
<text class="t" x="816.8" y="851.7" textLength="32.4" lengthAdjust="spacingAndGlyphs">Yellow</text>
<text class="t" x="863" y="851.7" textLength="43.4" lengthAdjust="spacingAndGlyphs">Magenta</text>
<text class="t" x="925.4" y="851.7" textLength="23" lengthAdjust="spacingAndGlyphs">Cyan</text>
<text class="t" x="965" y="851.7" textLength="47.6" lengthAdjust="spacingAndGlyphs">100% Red</text>
<text class="t" x="1026" y="839.7" textLength="26.5" lengthAdjust="spacingAndGlyphs">100%</text><text class="t" x="1026" y="851.7" textLength="29.5" lengthAdjust="spacingAndGlyphs">Green</text>
<text class="t" x="1079.4" y="839.7" textLength="26.5" lengthAdjust="spacingAndGlyphs">100%</text><text class="t" x="1079.4" y="851.7" textLength="21.5" lengthAdjust="spacingAndGlyphs">Blue</text>
<text x="1131.6" y="839.7" font-size="12" font-weight="bold" fill="#fff" textLength="26.5" lengthAdjust="spacingAndGlyphs">100%</text><text x="1131.6" y="851.7" font-size="12" font-weight="bold" fill="#fff" textLength="23" lengthAdjust="spacingAndGlyphs">Cyan</text>
<text class="t" x="1175" y="839.7" textLength="26.5" lengthAdjust="spacingAndGlyphs">100%</text><text class="t" x="1175" y="851.7" textLength="43.4" lengthAdjust="spacingAndGlyphs">Magenta</text>
<text class="t" x="1232.6" y="839.7" textLength="26.5" lengthAdjust="spacingAndGlyphs">100%</text><text class="t" x="1232.6" y="851.7" textLength="32" lengthAdjust="spacingAndGlyphs">Yellow</text>
</g>

<!-- transport controls -->
<rect x="1276.7" y="808" width="48.3" height="18" rx="2" fill="url(#btn)"/>
<circle cx="1301.7" cy="816" r="7" fill="url(#cir)"/><polygon points="1297,818.5 1306.5,818.5 1301.7,813" fill="#333"/>
<rect x="1276.7" y="827" width="48.3" height="43" fill="url(#btn)"/>
<rect x="1286.5" y="833.5" width="28.5" height="28.5" rx="5" fill="#9a9a9a" stroke="#333" stroke-width="3"/>
<rect x="1293.3" y="841" width="15" height="14" fill="#000"/>
<rect x="1326" y="808" width="46" height="29" fill="url(#btn)"/><rect x="1373" y="808" width="44" height="29" fill="url(#btn)"/><rect x="1418" y="808" width="44" height="29" fill="url(#btn)"/><rect x="1463" y="808" width="44.5" height="29" fill="url(#btn)"/>
<rect x="1508" y="808" width="44" height="29" fill="url(#dk)"/><rect x="1553" y="808" width="47" height="29" fill="url(#dk)"/>
<circle cx="1349" cy="823.3" r="10" fill="url(#cir)"/><rect x="1345" y="819.5" width="8" height="8" fill="#333"/>
<circle cx="1395.7" cy="823.3" r="10" fill="url(#cir)"/><polygon points="1392,818 1392,829 1401,823.5" fill="#333"/>
<circle cx="1440" cy="823.3" r="10" fill="url(#cir)"/>
<path d="M1436 818h-2.5v11h2.5M1444 818h2.5v11h-2.5" fill="none" stroke="#333" stroke-width="1.6"/><path d="M1437.5 823.5h1.6M1441 823.5h1.6" stroke="#333" stroke-width="1.6"/>
<circle cx="1484.7" cy="823.3" r="10" fill="url(#cir)"/>
<path d="M1484.7 823.3c-2-2.6-3-3-4.3-3a3 3 0 0 0 0 6c1.3 0 2.3-.4 4.3-3s3-3 4.3-3a3 3 0 0 1 0 6c-1.3 0-2.3-.4-4.3-3z" fill="none" stroke="#333" stroke-width="1.5"/>
<circle cx="1529.3" cy="823.3" r="10" fill="#2e2e2e"/>
<path d="M1524 822a5.5 5.5 0 0 1 9.5-3M1534.5 825a5.5 5.5 0 0 1-9.5 3" fill="none" stroke="#151515" stroke-width="1.8"/><path d="M1534.5 816v4.5h-4.5M1524 830.5V826h4.5" fill="none" stroke="#151515" stroke-width="1.6"/>
<circle cx="1575.3" cy="823.3" r="10" fill="#303030"/>
<rect x="1326" y="838" width="136" height="32" rx="3" fill="url(#btn)"/>
<rect x="1463" y="838" width="137" height="32" rx="3" fill="url(#btn)"/>
<circle cx="1356.7" cy="854.3" r="10" fill="url(#cir)"/>
<path d="M1356 849l-5 5.3 5 5.3M1361.5 849l-5 5.3 5 5.3" fill="none" stroke="#444" stroke-width="1.6"/>
<circle cx="1570" cy="854.3" r="10" fill="url(#cir)"/>
<path d="M1565.5 849l5 5.3-5 5.3M1571 849l5 5.3-5 5.3" fill="none" stroke="#444" stroke-width="1.6"/>
<text x="1383.3" y="861.7" font-size="23" fill="#2f2f2f" textLength="50.7" lengthAdjust="spacingAndGlyphs">Back</text>
<text x="1490" y="861.7" font-size="23" fill="#2f2f2f" textLength="52" lengthAdjust="spacingAndGlyphs">Next</text>
</svg>

<!-- DeltaE bars -->
<div class="b" style="top:224.8px;width:73.3px;background-color:#ff0"></div>
<div class="b" style="top:234.8px;width:156.3px;background-color:#f0f"></div>
<div class="b" style="top:242.8px;width:199.3px;background-color:#0ff"></div>
<div class="b" style="top:252.8px;width:23.3px;background-color:#00f"></div>
<div class="b" style="top:262.2px;width:204.3px;background-color:#0f0"></div>
<div class="b" style="top:271.8px;width:168.3px;background-color:#f00"></div>
<div class="b" style="top:281.8px;width:194.3px;background-color:#0086a5"></div>
<div class="b" style="top:289.8px;width:137.3px;background-color:#b5508f"></div>
<div class="b" style="top:299.5px;width:153.3px;background-color:#e8c020"></div>
<div class="b" style="top:308.8px;width:112.3px;background-color:#b03040"></div>
<div class="b" style="top:318.8px;width:197.3px;background-color:#469048"></div>
<div class="b" style="top:326.8px;width:90.3px;background-color:#353c97"></div>
<div class="b" style="top:336.8px;width:194.3px;background-color:#e8a030"></div>
<div class="b" style="top:345.8px;width:84.3px;background-color:#9cbb3c"></div>
<div class="b" style="top:356.2px;width:101.3px;background-color:#5c3a6c"></div>
<div class="b" style="top:365.5px;width:135.3px;background-color:#c05468"></div>
<div class="b" style="top:373.8px;width:125.3px;background-color:#4358a0"></div>
<div class="b" style="top:383.5px;width:184.3px;background-color:#d87028"></div>
<div class="b" style="top:393.2px;width:176.3px;background-color:#60b8a0"></div>
<div class="b" style="top:402.8px;width:139.3px;background-color:#8080b0"></div>
<div class="b" style="top:411.8px;width:131.3px;background-color:#566a40"></div>
<div class="b" style="top:420.8px;width:143.3px;background-color:#5c7aa0"></div>
<div class="b" style="top:429.8px;width:172.3px;background-color:#c09580"></div>
<div class="b" style="top:439.8px;width:161.3px;background-color:#735244"></div>
<div class="b" style="top:448.8px;width:33.7px;background-color:#000"></div>
<div class="b" style="top:458.8px;width:138.3px;background-color:#9a9a9a"></div>
<div class="b" style="top:466.8px;width:120.3px;background-color:#b8b8b8"></div>
<div class="b" style="top:476.8px;width:110.3px;background-color:#cfcfcf"></div>
<div class="b" style="top:486.2px;width:104.3px;background-color:#e4e4e4"></div>
<div class="b" style="top:495.8px;width:87.3px;background-color:#fff"></div>

<!-- table -->
<div id="hl"></div>
<div class="c" style="left:320px">&nbsp;<br>x: CIE31<br>y: CIE31<br>Y<br>Target x:CIE31<br>Target y:CIE31<br>Target Y<br>ΔE 2000</div>
<div class="c" style="left:394px">White<br>0.32<br>0.33<br>334.84<br>0.31<br>0.33<br>334.84<br>4.12</div>
<div class="c" style="left:432.6px">Gray 80<br>0.32<br>0.33<br>246.60<br>0.31<br>0.33<br>264.96<br>4.90</div>
<div class="c" style="left:472px">Gray 65<br>0.32<br>0.33<br>195.38<br>0.31<br>0.33<br>213.49<br>5.23</div>
<div class="c" style="left:511.7px">Gray 50<br>0.32<br>0.33<br>146.97<br>0.31<br>0.33<br>164.41<br>5.63</div>
<div class="c" style="left:551px">Gray 35<br>0.33<br>0.33<br>96.43<br>0.31<br>0.33<br>114.49<br>6.50</div>
<div class="c" style="left:591px">Black<br>0.32<br>0.27<br>0.34<br>0.31<br>0.33<br>0.00<br>1.63</div>
<div class="c" style="left:619.5px">Dark Skin<br>0.45<br>0.36<br>25.37<br>0.40<br>0.36<br>33.73<br>7.61</div>
<div class="c" style="left:666.6px">Light Skin<br>0.43<br>0.36<br>105.95<br>0.38<br>0.36<br>116.84<br>8.08</div>
<div class="c" style="left:714.6px">Blue Sky<br>0.23<br>0.25<br>45.75<br>0.25<br>0.27<br>62.61<br>6.71</div>
<div class="c" style="left:757px">Foliage<br>0.34<br>0.44<br>29.63<br>0.34<br>0.43<br>43.64<br>6.20</div>
<div class="c" style="left:794.5px">Blue Flower<br>0.27<br>0.24<br>61.13<br>0.27<br>0.25<br>78.08<br>6.55</div>
<div class="c" style="left:852px">Bluish Green<br>0.22<br>0.38<br>113.52<br>0.26<br>0.36<br>140.21<br>8.29</div>
<div class="c" style="left:914px">Orange<br>0.57<br>0.38<br>92.48<br>0.51<br>0.41<br>94.92<br>8.64</div>
<div class="c" style="left:952px">Purplish Blue<br>0.20<br>0.17<br>27.06<br>0.22<br>0.19<br>39.36<br>5.86</div>
<div class="c" style="left:1015.5px">Moderate Red<br>0.54<br>0.31<br>62.71<br>0.46<br>0.31<br>62.53<br>6.40</div>
<div class="c" style="left:1084.7px">Purple<br>0.29<br>0.21<br>14.51<br>0.29<br>0.22<br>22.35<br>4.80</div>
<div class="c" style="left:1118.7px">Yellow Green<br>0.38<br>0.52<br>122.36<br>0.38<br>0.49<br>143.17<br>3.97</div>
<div class="c" style="left:1183px">Orange Yellow<br>0.52<br>0.42<br>136.24<br>0.47<br>0.44<br>142.35<br>9.14</div>
<div class="c" style="left:1251.8px">Blue<br>0.18<br>0.12<br>14.19<br>0.19<br>0.14<br>20.90<br>4.25</div>
<div class="c" style="left:1284px">Green<br>0.26<br>0.55<br><span style="color:#222">55.80</span><br>0.31<br>0.49<br>76.92<br>9.21</div>
<div class="c" style="left:1317px">Red<br>0.60<br>0.31<br>42.45<br>0.54<br>0.32<br>39.05<br>5.28</div>
<div class="c" style="left:1349.7px">Yellow<br>0.48<br>0.47<br>187.77<br>0.45<br>0.47<br>197.43<br>7.24</div>
<div class="c" style="left:1387.8px">Magenta<br>0.44<br>0.25<br>61.41<br>0.37<br>0.25<br>63.04<br>6.42</div>
<div class="c" style="left:1432.6px">Cyan<br>0.17<br>0.26<br>45.22<br>0.21<br>0.27<br>65.02<br>9.10</div>
<div class="c" style="left:1465.7px">100% Red<br>0.66<br>0.32<br>97.42<br>0.64<br>0.33<br>71.21<br>7.88</div>
<div class="c" style="left:1514.7px">100% Green<br>0.21<br>0.71<br>213.58<br>0.30<br>0.60<br>239.46<br>9.63</div>
<div class="c" style="left:1574px">100% Blue<br>0.15<br>0.06<br>22.26<br>0.15<br>0.06<br>24.17<br>1.13</div>
</body></html>
